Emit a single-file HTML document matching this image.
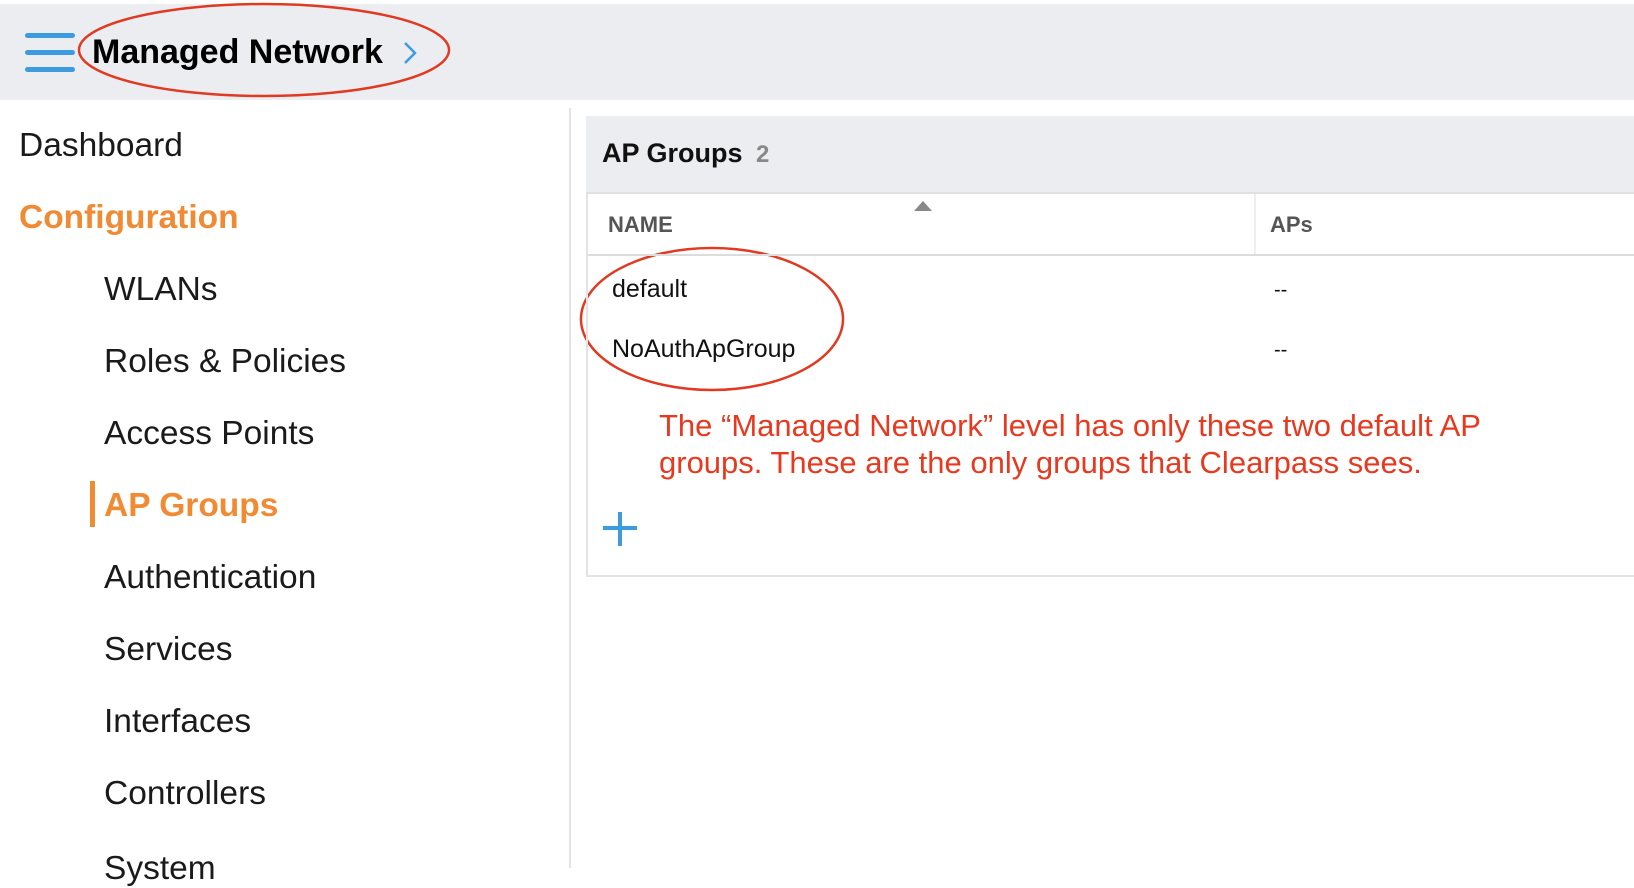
<!DOCTYPE html>
<html><head><meta charset="utf-8"><style>
*{margin:0;padding:0;box-sizing:border-box}
body{width:1634px;height:868px;overflow:hidden;background:#fff;font-family:"Liberation Sans",sans-serif;position:relative;color:#111}
.a{position:absolute;white-space:nowrap}
.side{font-size:33.5px;color:#1a1a1a}
</style></head><body>
<div class="a" style="left:0;top:4px;width:1634px;height:96px;background:#ecedf1"></div>
<div class="a" style="left:25px;top:33px;width:50px;height:5px;background:#3d9be0;border-radius:3px"></div>
<div class="a" style="left:25px;top:50px;width:50px;height:5px;background:#3d9be0;border-radius:3px"></div>
<div class="a" style="left:25px;top:67px;width:50px;height:5px;background:#3d9be0;border-radius:3px"></div>
<div class="a" style="left:92px;top:33px;font-size:34px;font-weight:bold;color:#000">Managed Network</div>
<svg class="a" style="left:400px;top:40px" width="20" height="26"><path d="M5 3 L15 13 L5 23" fill="none" stroke="#3d9be0" stroke-width="2.5"/></svg>
<svg class="a" style="left:0;top:0" width="1634" height="868"><ellipse cx="264" cy="50" rx="185" ry="46" fill="none" stroke="#e03a22" stroke-width="2.5"/><ellipse cx="712" cy="319" rx="131" ry="71" fill="none" stroke="#e03a22" stroke-width="2.5"/></svg>
<div class="a" style="left:569px;top:108px;width:2px;height:760px;background:#e3e3e3"></div>
<div class="a side" style="left:19px;top:127px">Dashboard</div>
<div class="a side" style="left:19px;top:199px;color:#f08a33;font-weight:bold">Configuration</div>
<div class="a side" style="left:104px;top:271px">WLANs</div>
<div class="a side" style="left:104px;top:343px">Roles &amp; Policies</div>
<div class="a side" style="left:104px;top:415px">Access Points</div>
<div class="a" style="left:90px;top:481px;width:5px;height:46px;background:#f08a33"></div>
<div class="a side" style="left:104px;top:487px;color:#f08a33;font-weight:bold">AP Groups</div>
<div class="a side" style="left:104px;top:559px">Authentication</div>
<div class="a side" style="left:104px;top:631px">Services</div>
<div class="a side" style="left:104px;top:703px">Interfaces</div>
<div class="a side" style="left:104px;top:775px">Controllers</div>
<div class="a side" style="left:104px;top:850px">System</div>
<div class="a" style="left:586px;top:116px;width:1048px;height:78px;background:#ecedf1;border-bottom:2px solid #e0e0e0"></div>
<div class="a" style="left:602px;top:138px;font-size:27px;font-weight:bold">AP Groups <span style="color:#888;font-size:24px;margin-left:6px">2</span></div>
<div class="a" style="left:586px;top:194px;width:1048px;height:383px;border-left:2px solid #e3e3e3;border-bottom:2px solid #e3e3e3"></div>
<div class="a" style="left:588px;top:254px;width:1046px;height:2px;background:#dcdcdc"></div>
<div class="a" style="left:1254px;top:194px;width:2px;height:60px;background:#eee"></div>
<svg class="a" style="left:913px;top:200px" width="20" height="12"><path d="M1 11 L10 1 L19 11Z" fill="#888"/></svg>
<div class="a" style="left:608px;top:212px;font-size:22px;font-weight:bold;color:#555">NAME</div>
<div class="a" style="left:1270px;top:212px;font-size:22px;font-weight:bold;color:#555">APs</div>
<div class="a" style="left:612px;top:275px;font-size:25px">default</div>
<div class="a" style="left:612px;top:335px;font-size:25px">NoAuthApGroup</div>
<div class="a" style="left:1274px;top:279px;font-size:20px">--</div>
<div class="a" style="left:1274px;top:339px;font-size:20px">--</div>
<div class="a" style="left:659px;top:407px;font-size:31px;color:#e8391f;line-height:37px">The “Managed Network” level has only these two default AP<br>groups. These are the only groups that Clearpass sees.</div>
<div class="a" style="left:603px;top:526px;width:34px;height:4px;background:#3d9be0"></div>
<div class="a" style="left:618px;top:512px;width:4px;height:34px;background:#3d9be0"></div>
</body></html>
